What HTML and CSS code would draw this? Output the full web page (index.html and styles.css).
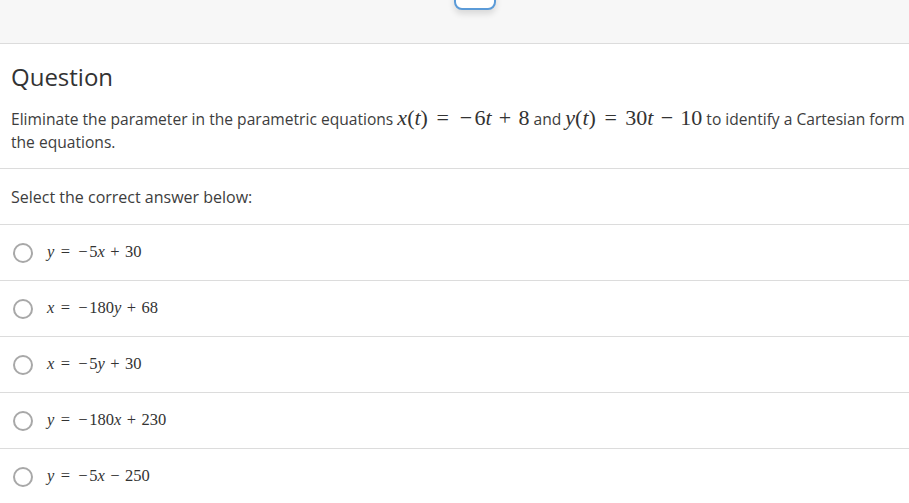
FILE: index.html
```html
<!DOCTYPE html>
<html>
<head>
<meta charset="utf-8">
<link rel="stylesheet" href="styles.css">
</head>
<body>
<div class="page">
  <div class="topbar"><div class="tab"></div></div>
  <div class="question">
    <h2 class="title">Question</h2>
    <p class="prompt">Eliminate the parameter in the parametric equations <span class="m"><i>x</i>(<i>t</i>)<span class="rel">=</span><span class="op">−</span>6<i>t</i><span class="bin">+</span>8</span> and <span class="m"><i>y</i>(<i>t</i>)<span class="rel">=</span>30<i>t</i><span class="bin">−</span>10</span> to identify a Cartesian form of the equations.</p>
  </div>
  <div class="row select">Select the correct answer below:</div>
  <div class="row opt"><span class="radio"></span><span class="m sm"><i>y</i><span class="rel">=</span><span class="op">−</span>5<i>x</i><span class="bin">+</span>30</span></div>
  <div class="row opt"><span class="radio"></span><span class="m sm"><i>x</i><span class="rel">=</span><span class="op">−</span>180<i>y</i><span class="bin">+</span>68</span></div>
  <div class="row opt"><span class="radio"></span><span class="m sm"><i>x</i><span class="rel">=</span><span class="op">−</span>5<i>y</i><span class="bin">+</span>30</span></div>
  <div class="row opt"><span class="radio"></span><span class="m sm"><i>y</i><span class="rel">=</span><span class="op">−</span>180<i>x</i><span class="bin">+</span>230</span></div>
  <div class="row opt"><span class="radio"></span><span class="m sm"><i>y</i><span class="rel">=</span><span class="op">−</span>5<i>x</i><span class="bin">−</span>250</span></div>
</div>
</body>
</html>
```
FILE: styles.css
```css
html, body {
  margin: 0;
  padding: 0;
  background: #fff;
  overflow: hidden;
}
body {
  font-family: "Open Sans", "Liberation Sans", sans-serif;
  color: #3d3d3d;
}
.page {
  width: 950px;
}
.topbar {
  height: 43px;
  background: #f7f7f7;
  border-bottom: 1px solid #dcdcdc;
  display: flex;
  justify-content: center;
  align-items: flex-start;
  overflow: hidden;
}
.tab {
  width: 38px;
  height: 20px;
  margin-top: -14px;
  border: 2px solid #5b9bd8;
  border-radius: 8px;
  background: #fff;
  box-shadow: 0 4px 6px rgba(0,0,0,0.12);
}
.question {
  padding: 0 11px;
}
.title {
  margin: 18px 0 0;
  font-size: 24px;
  line-height: 30px;
  font-weight: 400;
  color: #333;
}
.prompt {
  margin: 15px 0 14px;
  font-size: 15.6px;
  line-height: 23px;
}
.m {
  font-family: "Liberation Serif", "DejaVu Serif", serif;
  font-size: 22px;
  line-height: 1;
  color: #333;
  white-space: nowrap;
}
.m.sm {
  font-size: 16.5px;
}
.m i {
  font-style: italic;
}
.rel, .bin, .op {
  display: inline-block;
  width: 0.78em;
  text-align: center;
}
.rel {
  margin: 0 0.28em;
}
.bin {
  margin: 0 0.22em;
}
.row {
  border-top: 1px solid #dcdcdc;
  height: 55px;
  display: flex;
  align-items: center;
  padding-left: 11px;
  font-size: 16px;
}
.opt {
  padding-left: 13px;
}
.radio {
  width: 16px;
  height: 16px;
  border: 2px solid #a8a8a8;
  border-radius: 50%;
  margin-right: 14px;
  flex: none;
}
```
